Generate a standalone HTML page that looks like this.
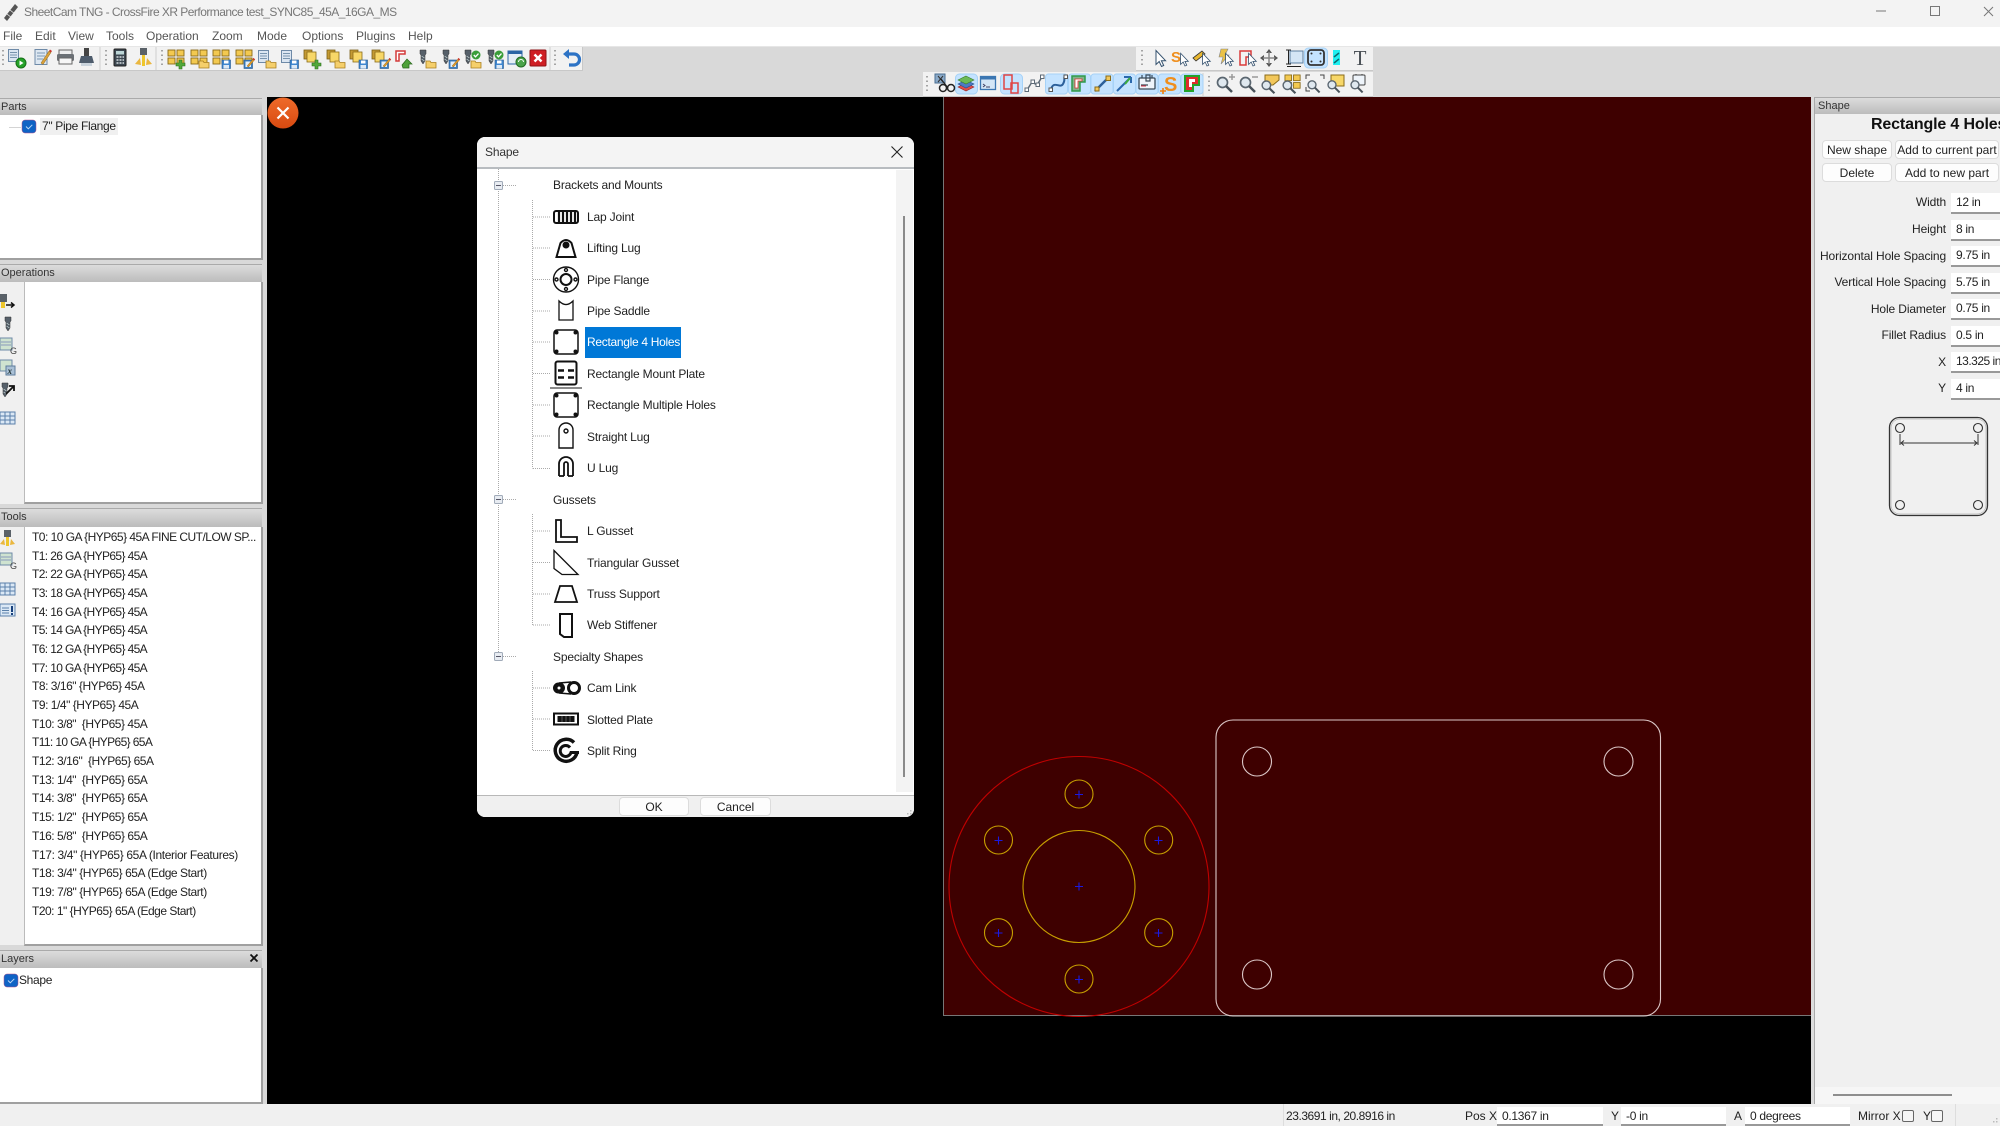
<!DOCTYPE html>
<html><head><meta charset="utf-8"><title>SheetCam TNG</title>
<style>
html,body{margin:0;padding:0;background:#d9d9d9}
#r{position:relative;width:2000px;height:1126px;overflow:hidden;background:#d9d9d9;font-family:"Liberation Sans",sans-serif;font-size:12px;color:#222;filter:blur(.35px)}
.a{position:absolute}
.t{position:absolute;white-space:nowrap;line-height:16px;height:16px;letter-spacing:-.33px}
.t.g{letter-spacing:-.62px}
.t.k{letter-spacing:-.47px}
#d .t{letter-spacing:-.17px}
.h{position:absolute;background:linear-gradient(#dcdcdc,#bcbcbc);border-top:1px solid #aaa;box-sizing:border-box;line-height:16px;padding-left:1px;color:#333;font-size:11px}
.w{position:absolute;background:#fff;box-sizing:border-box;border-right:2px solid #a0a0a0;border-bottom:2px solid #a0a0a0;border-left:1px solid #bbb}
.b{position:absolute;background:#fdfdfd;border:1px solid #dcdcdc;border-radius:4px;box-sizing:border-box;text-align:center;line-height:18px;color:#222;white-space:nowrap}
.i{position:absolute;background:#fff;border-bottom:2px solid #999;box-sizing:border-box;line-height:18px;padding-left:5px;white-space:nowrap;overflow:hidden;color:#222;letter-spacing:-.3px}
.l{position:absolute;right:54px;white-space:nowrap;line-height:16px;color:#222;letter-spacing:-.12px}
.t.m{color:#555;letter-spacing:0}
.hl{fill:#c4e3ff;stroke:#a6d2f7}
svg{position:absolute;left:0;top:0}
</style></head><body><div id="r">

<!-- title bar -->
<div class="a" style="left:0;top:0;width:2000px;height:27px;background:#f3f3f3"></div>
<div class="t" style="left:24px;top:4px;color:#777;font-size:12px;letter-spacing:-.53px">SheetCam TNG - CrossFire XR Performance test_SYNC85_45A_16GA_MS</div>
<!-- menu -->
<div class="a" style="left:0;top:27px;width:2000px;height:19px;background:#fff"></div>
<div class="t m" style="left:3px;top:28px">File</div>
<div class="t m" style="left:35px;top:28px">Edit</div>
<div class="t m" style="left:68px;top:28px">View</div>
<div class="t m" style="left:106px;top:28px">Tools</div>
<div class="t m" style="left:146px;top:28px">Operation</div>
<div class="t m" style="left:212px;top:28px">Zoom</div>
<div class="t m" style="left:257px;top:28px">Mode</div>
<div class="t m" style="left:302px;top:28px">Options</div>
<div class="t m" style="left:356px;top:28px">Plugins</div>
<div class="t m" style="left:408px;top:28px">Help</div>

<!-- toolbars background -->
<div class="a" style="left:0;top:46px;width:583px;height:25px;background:#f2f2f2;border-bottom:1px solid #c8c8c8;border-right:1px solid #c8c8c8;box-sizing:border-box"></div>
<div class="a" style="left:1136px;top:46px;width:237px;height:25px;background:#f2f2f2;border-bottom:1px solid #c8c8c8;box-sizing:border-box"></div>
<div class="a" style="left:923px;top:72px;width:450px;height:25px;background:#f2f2f2;border-bottom:1px solid #c8c8c8;box-sizing:border-box"></div>
<div class="a" style="left:0;top:46px;width:2000px;height:1px;background:#e6e6e6"></div>

<!-- canvas -->
<div class="a" style="left:267px;top:97px;width:1544px;height:1007px;background:#000"></div>
<div class="a" style="left:943px;top:97px;width:868px;height:919px;background:#3e0000;border-left:1px solid #777;border-bottom:1px solid #777;box-sizing:border-box"></div>

<!-- Left panels -->
<div class="h" style="left:0;top:98px;width:262px;height:17px">Parts</div>
<div class="w" style="left:-2px;top:115px;width:265px;height:145px"></div>
<div class="a" style="left:40px;top:118px;width:78px;height:17px;background:#f0f0f0"></div>
<div class="t" style="left:42px;top:118px">7" Pipe Flange</div>

<div class="h" style="left:0;top:264px;width:262px;height:18px">Operations</div>
<div class="a" style="left:0;top:282px;width:24px;height:222px;background:#f0f0f0"></div>
<div class="w" style="left:24px;top:282px;width:239px;height:222px"></div>

<div class="h" style="left:0;top:508px;width:262px;height:19px">Tools</div>
<div class="a" style="left:0;top:527px;width:24px;height:418px;background:#f0f0f0"></div>
<div class="w" style="left:24px;top:527px;width:239px;height:419px"></div>
<div class="t" style="left:32px;top:529px;letter-spacing:-.52px">T0: 10 GA {HYP65} 45A FINE CUT/LOW SP...</div>
<div class="t g" style="left:32px;top:548px">T1: 26 GA {HYP65} 45A</div>
<div class="t g" style="left:32px;top:566px">T2: 22 GA {HYP65} 45A</div>
<div class="t g" style="left:32px;top:585px">T3: 18 GA {HYP65} 45A</div>
<div class="t g" style="left:32px;top:604px">T4: 16 GA {HYP65} 45A</div>
<div class="t g" style="left:32px;top:622px">T5: 14 GA {HYP65} 45A</div>
<div class="t g" style="left:32px;top:641px">T6: 12 GA {HYP65} 45A</div>
<div class="t g" style="left:32px;top:660px">T7: 10 GA {HYP65} 45A</div>
<div class="t k" style="left:32px;top:678px">T8: 3/16" {HYP65} 45A</div>
<div class="t k" style="left:32px;top:697px">T9: 1/4" {HYP65} 45A</div>
<div class="t k" style="left:32px;top:716px">T10: 3/8"&nbsp; {HYP65} 45A</div>
<div class="t g" style="left:32px;top:734px">T11: 10 GA {HYP65} 65A</div>
<div class="t k" style="left:32px;top:753px">T12: 3/16"&nbsp; {HYP65} 65A</div>
<div class="t k" style="left:32px;top:772px">T13: 1/4"&nbsp; {HYP65} 65A</div>
<div class="t k" style="left:32px;top:790px">T14: 3/8"&nbsp; {HYP65} 65A</div>
<div class="t k" style="left:32px;top:809px">T15: 1/2"&nbsp; {HYP65} 65A</div>
<div class="t k" style="left:32px;top:828px">T16: 5/8"&nbsp; {HYP65} 65A</div>
<div class="t" style="left:32px;top:847px;letter-spacing:-.37px">T17: 3/4" {HYP65} 65A (Interior Features)</div>
<div class="t" style="left:32px;top:865px;letter-spacing:-.44px">T18: 3/4" {HYP65} 65A (Edge Start)</div>
<div class="t" style="left:32px;top:884px;letter-spacing:-.44px">T19: 7/8" {HYP65} 65A (Edge Start)</div>
<div class="t" style="left:32px;top:903px;letter-spacing:-.5px">T20: 1" {HYP65} 65A (Edge Start)</div>

<div class="h" style="left:0;top:950px;width:262px;height:18px">Layers</div>
<div class="w" style="left:-2px;top:968px;width:265px;height:136px"></div>
<div class="t" style="left:19px;top:972px">Shape</div>

<!-- Right panel -->
<div class="a" style="left:1811px;top:97px;width:4px;height:1007px;background:#dcdcdc;border-right:1px solid #aaa;box-sizing:border-box"></div>
<div class="a" style="left:1815px;top:97px;width:185px;height:1007px;background:#f0f0f0"></div>
<div class="h" style="left:1815px;top:97px;width:185px;height:17px;padding-left:3px;font-size:11px">Shape</div>
<div class="a" style="left:1815px;top:1087px;width:185px;height:17px;background:#f6f6f6"></div>
<div class="a" style="left:1833px;top:1094px;width:119px;height:2px;background:#8e8e8e"></div>
<div class="t" style="left:1871px;top:117px;font-size:16px;font-weight:bold;color:#111;letter-spacing:-.15px">Rectangle 4 Holes</div>
<div class="b" style="left:1822px;top:140px;width:70px;height:19px">New shape</div>
<div class="b" style="left:1895px;top:140px;width:104px;height:19px">Add to current part</div>
<div class="b" style="left:1822px;top:163px;width:70px;height:19px">Delete</div>
<div class="b" style="left:1895px;top:163px;width:104px;height:19px">Add to new part</div>

<div class="l" style="top:194px">Width</div><div class="i" style="left:1951px;top:193px;width:49px;height:21px">12 in</div>
<div class="l" style="top:221px">Height</div><div class="i" style="left:1951px;top:219.5px;width:49px;height:21px">8 in</div>
<div class="l" style="top:247.5px">Horizontal Hole Spacing</div><div class="i" style="left:1951px;top:246px;width:49px;height:21px">9.75 in</div>
<div class="l" style="top:274px">Vertical Hole Spacing</div><div class="i" style="left:1951px;top:272.5px;width:49px;height:21px">5.75 in</div>
<div class="l" style="top:300.5px">Hole Diameter</div><div class="i" style="left:1951px;top:299px;width:49px;height:21px">0.75 in</div>
<div class="l" style="top:327px">Fillet Radius</div><div class="i" style="left:1951px;top:325.5px;width:49px;height:21px">0.5 in</div>
<div class="l" style="top:353.5px">X</div><div class="i" style="left:1951px;top:352px;width:49px;height:21px;letter-spacing:-.5px">13.325 in</div>
<div class="l" style="top:380px">Y</div><div class="i" style="left:1951px;top:378.5px;width:49px;height:21px">4 in</div>

<!-- Status bar -->
<div class="a" style="left:0;top:1104px;width:2000px;height:22px;background:#f0f0f0"></div>
<div class="a" style="left:1283px;top:1104px;width:1px;height:22px;background:#ddd"></div>
<div class="a" style="left:1955px;top:1104px;width:1px;height:22px;background:#ddd"></div>
<div class="t" style="left:1286px;top:1108px;letter-spacing:-.45px">23.3691 in, 20.8916 in</div>
<div class="t" style="left:1465px;top:1108px;letter-spacing:0">Pos X</div>
<div class="i" style="left:1497px;top:1107px;width:106px;height:19px;font-size:12px">0.1367 in</div>
<div class="t" style="left:1611px;top:1108px">Y</div>
<div class="i" style="left:1621px;top:1107px;width:105px;height:19px">-0 in</div>
<div class="t" style="left:1734px;top:1108px">A</div>
<div class="i" style="left:1745px;top:1107px;width:105px;height:19px">0 degrees</div>
<div class="t" style="left:1858px;top:1108px;letter-spacing:0">Mirror X</div>
<div class="a" style="left:1902px;top:1110px;width:12px;height:12px;border:1px solid #666;border-radius:2px;box-sizing:border-box;background:#f6f6f6"></div>
<div class="t" style="left:1923px;top:1108px">Y</div>
<div class="a" style="left:1931px;top:1110px;width:12px;height:12px;border:1px solid #666;border-radius:2px;box-sizing:border-box;background:#f6f6f6"></div>

<!-- Global SVG: shapes, icons -->
<svg width="2000" height="1126" viewBox="0 0 2000 1126" fill="none">
<defs>
<g id="folder"><path d="M9 12h4l1 1.500h5v5.500H9z" fill="#f5cf6b" stroke="#a97f1f" stroke-width=".8"/></g>
<g id="floppy"><rect x="10" y="11" width="8.500" height="8.500" fill="#3e86cf" stroke="#23578c" stroke-width=".6"/><rect x="12" y="11.500" width="4.500" height="3" fill="#fff"/><rect x="11.500" y="16" width="5.500" height="3.500" fill="#dce9f6"/></g>
<g id="plus"><path d="M12 11h3v3h3v3h-3v3h-3v-3H9v-3h3z" fill="#53a83a" stroke="#2c6f1b" stroke-width=".6"/></g>
<g id="edit"><rect x="9" y="11" width="8.500" height="8.500" fill="#3e7fbf" stroke="#23578c" stroke-width=".6"/><rect x="10.500" y="12.500" width="5.500" height="5.500" fill="#e5f0fa"/><path d="M12 17l6-7 1.500 1-6 7z" fill="#dd9a2a" stroke="#885a10" stroke-width=".4"/><path d="M18 9.500l1.700 1.400" stroke="#c8332c" stroke-width="1.500"/></g>
<g id="y4"><g fill="#f3c950" stroke="#8a6b18" stroke-width=".9"><rect x="1" y="1" width="7" height="6"/><rect x="10" y="1" width="7" height="6"/><rect x="1" y="9" width="7" height="6"/><rect x="10" y="9" width="7" height="6"/></g></g>
<g id="y2"><rect x="1" y="1" width="8" height="9" fill="#c49a33" stroke="#7b5f16" stroke-width=".8"/><rect x="4" y="3" width="9" height="10" fill="#f7d768" stroke="#8a6b18" stroke-width=".8"/></g>
<g id="doc"><rect x="1.500" y="1.500" width="10" height="12" fill="#dbe6f2" stroke="#6e8aa8"/><path d="M3 4.500h7M3 7h7M3 9.500h7" stroke="#7894ae"/></g>
<g id="mill"><path d="M3 1h6v4l-1 1v6l-2 3-2-3V6L3 5z" fill="#56606a" stroke="#333"  stroke-width=".5"/><path d="M4.500 7l3 2M4.500 10l3 2" stroke="#cdd" stroke-width=".7"/></g>
<g id="chk"><circle cx="14" cy="6" r="4.500" fill="#3a9d3a"/><path d="M11.800 6l1.700 1.800 3-3.200" stroke="#fff" stroke-width="1.300"/></g>
<g id="arrow"><path d="M7 1.500v14l3.200-3 2.300 5 2.200-1-2.300-4.800h4.200z" fill="#fff" stroke="#33506d" stroke-width="1"/></g>
<g id="glass"><circle cx="7.500" cy="8.500" r="5" fill="#dfe8ef" stroke="#5a6670" stroke-width="1.700"/><path d="M11 12l6 6" stroke="#48525a" stroke-width="2.500"/></g>
<g id="check"><rect x="0" y="0" width="14" height="13" rx="3" fill="#0f63c5" stroke="#b04f8a" stroke-width=".5"/><path d="M4 6.500l2.300 2.300 4-4" stroke="#bcd7f5" stroke-width="1"/></g>
</defs>

<!-- grippers -->
<g stroke="#8a8a8a" stroke-width="1.500" stroke-dasharray="1.500 3">
<path d="M3 50v17M106 50v17M162 50v17M555 50v17M1142 50v17M927 76v17M1209 76v17"/>
</g>
<path d="M100 47v23M156 47v23M550 47v23M1203 73v23" stroke="#cfcfcf"/>

<!-- Window icon + buttons -->
<path d="M4 18L15 4l3 3L7 21z" fill="#555"/><path d="M7 14l5 4M10 10l5 4" stroke="#eee" stroke-width=".8"/>
<path d="M1876 11h10" stroke="#777"/><rect x="1930.500" y="6.500" width="9" height="9" stroke="#777"/><path d="M1984 7l9 9M1993 7l-9 9" stroke="#777"/>

<!-- Toolbar 1 -->
<g transform="translate(7,48)"><use href="#doc"/><circle cx="14" cy="15" r="5" fill="#25a22a" stroke="#167016"/><path d="M12.500 12.500v5l4-2.500z" fill="#fff"/></g>
<g transform="translate(33,48)"><rect x="2" y="1.500" width="12" height="15" fill="#dde7f1" stroke="#6e8aa8"/><path d="M4 5h8M4 8h8M4 11h6" stroke="#7c97b2"/><path d="M8 15l8-12 2 1.500-8 12z" fill="#d9a13a" stroke="#8c6416" stroke-width=".5"/><path d="M16 3l1-1.500 2 1.500-1 1.500z" fill="#c8332c"/></g>
<g transform="translate(56,48)"><rect x="3" y="2" width="13" height="5" fill="#eee" stroke="#666"/><rect x="1" y="6" width="17" height="7" rx="1.500" fill="#6b7075"/><rect x="3" y="10" width="13" height="6" fill="#f6f6f6" stroke="#666"/></g>
<g transform="translate(78,48)"><rect x="6" y="0" width="5" height="8" fill="#444"/><path d="M3 8h11l2 7H1z" fill="#4e5c6c"/><rect x="3" y="15" width="11" height="3" fill="#c9d3dc"/></g>
<g transform="translate(111,48)"><rect x="3" y="1" width="12" height="17" rx="1" fill="#3c4750" stroke="#222"/><rect x="5" y="3" width="8" height="3.500" fill="#bcd5d6"/><path d="M5.500 9h2M8.500 9h2M11.500 9h1.500M5.500 12h2M8.500 12h2M11.500 12h1.500M5.500 15h2M8.500 15h2M11.500 15h1.500" stroke="#d6dee2" stroke-width="1.500"/></g>
<g transform="translate(134,48)"><rect x="6" y="0" width="7" height="7" fill="#5a6168"/><rect x="8" y="7" width="3" height="11" fill="#eec62c"/><path d="M1 16l5-6 1 7zM18 16l-5-6-1 7z" fill="#eab740"/></g>
<g transform="translate(167,49)"><use href="#y4"/><use href="#plus"/></g>
<g transform="translate(190,49)"><use href="#y4"/><use href="#folder"/></g>
<g transform="translate(212,49)"><use href="#y4"/><use href="#floppy"/></g>
<g transform="translate(235,49)"><use href="#y4"/><use href="#edit"/></g>
<g transform="translate(257,49)"><use href="#doc"/><use href="#folder"/></g>
<g transform="translate(280,49)"><use href="#doc"/><use href="#floppy"/></g>
<g transform="translate(303,49)"><use href="#y2"/><use href="#plus"/></g>
<g transform="translate(326,49)"><use href="#y2"/><use href="#folder"/></g>
<g transform="translate(349,49)"><use href="#y2"/><use href="#floppy"/></g>
<g transform="translate(371,49)"><use href="#y2"/><use href="#edit"/></g>
<g transform="translate(394,49)"><path d="M2 2h9v3H5v7H2z" fill="#fff" stroke="#d33a3a" stroke-width="1.500"/><path d="M8 16l5-6 5 5h-3v4H9z" fill="#4ea13a" stroke="#27661a" stroke-width=".7"/></g>
<g transform="translate(417,49)"><use href="#mill"/><use href="#folder"/></g>
<g transform="translate(440,49)"><use href="#mill"/><use href="#edit"/></g>
<g transform="translate(462,49)"><use href="#mill"/><use href="#folder"/><use href="#chk"/></g>
<g transform="translate(485,49)"><use href="#mill"/><use href="#floppy"/><use href="#chk"/></g>
<g transform="translate(507,49)"><rect x="1" y="2" width="14" height="13" fill="#e6eef6" stroke="#2b65a5" stroke-width="1"/><rect x="1" y="2" width="14" height="3" fill="#2b65a5"/><circle cx="14" cy="13" r="5" fill="#4ba34a" stroke="#226b22"/><path d="M11.500 13a2.500 2.500 0 0 1 5 0" stroke="#fff"/></g>
<g transform="translate(529,49)"><rect x="1" y="1" width="16" height="16" rx="1" fill="#cf1f24" stroke="#8f1316"/><path d="M5.500 5.500l7 7M12.500 5.500l-7 7" stroke="#fff" stroke-width="2.500"/></g>
<path d="M567 54h7a5.500 5.500 0 0 1 0 11h-5" stroke="#2d73c5" stroke-width="3.200" fill="none"/>
<path d="M563 54l6-5v10z" fill="#2d73c5"/>

<!-- Right toolbar highlights -->
<g class="hl"><rect x="1304.500" y="48" width="23" height="20" rx="4"/>
<rect x="955.500" y="74" width="22" height="20" rx="4"/><rect x="1000.500" y="74" width="22" height="20" rx="4"/><rect x="1045.500" y="74" width="22" height="20" rx="3"/><rect x="1068.500" y="74" width="22" height="20" rx="3"/><rect x="1091" y="74" width="22" height="20" rx="3"/><rect x="1113.500" y="74" width="22" height="20" rx="3"/><rect x="1136" y="74" width="22" height="20" rx="3"/><rect x="1158.500" y="74" width="22" height="20" rx="3"/><rect x="1181" y="74" width="22" height="20" rx="3"/></g>

<!-- Toolbar top right -->
<g transform="translate(1149,49)"><use href="#arrow"/></g>
<text x="1171" y="62" font-family="Liberation Sans" font-weight="bold" font-size="15" fill="#ef8f1e">S</text><g transform="translate(1175,52) scale(.8)"><use href="#arrow"/></g>
<g transform="translate(1192,48)"><path d="M1 10l9-7 3 3-9 7z" fill="#e9b72f" stroke="#333" stroke-width=".8"/></g><g transform="translate(1197,52) scale(.8)"><use href="#arrow"/></g>
<g transform="translate(1216,48)"><path d="M5 1h7l-3 6h4l-8 9 2-7H3z" fill="#eac248" stroke="#888" stroke-width=".6"/></g><g transform="translate(1220,52) scale(.8)"><use href="#arrow"/></g>
<path d="M1240 65V51h11v6h-5v8z" stroke="#d93a3a" stroke-width="1.500"/><g transform="translate(1243,52) scale(.8)"><use href="#arrow"/></g>
<path d="M1269 49l3 4h-6zM1269 67l3-4h-6zM1260 58l4-3v6zM1278 58l-4-3v6z" fill="#555"/><path d="M1269 52v12M1263 58h12" stroke="#888" stroke-width="1.500"/>
<rect x="1290" y="51" width="13" height="12" fill="#d4e6f6" stroke="#5d80a2"/><path d="M1287 50h5M1287 64h5M1289.500 50v14M1288 66.500h14" stroke="#222" transform="translate(-1,0)"/>
<rect x="1308" y="50" width="16" height="15" rx="3" stroke="#333" stroke-width="1.800"/><g fill="#333"><circle cx="1311.500" cy="53.500" r="1"/><circle cx="1320.500" cy="53.500" r="1"/><circle cx="1311.500" cy="61.500" r="1"/><circle cx="1320.500" cy="61.500" r="1"/></g>
<rect x="1333" y="50" width="7" height="15" fill="#1ef0f2"/><path d="M1334 57l5-4M1334 63l5-4" stroke="#0c6a6e" stroke-width="1.500"/>
<text x="1360" y="65" text-anchor="middle" font-family="Liberation Serif" font-size="21" fill="#4a5056">T</text>

<!-- Toolbar second row -->
<g transform="translate(935,74)"><rect x="0" y="0" width="10" height="9" fill="#8aa9c8" stroke="#4a6f92"/><path d="M3 2l5 6M8 2L3 8" stroke="#333"/><circle cx="8" cy="14" r="3.500" stroke="#222" stroke-width="1.500"/><circle cx="16" cy="14" r="3.500" stroke="#222" stroke-width="1.500"/><path d="M6 5l7 9" stroke="#222" stroke-width="1.300"/></g>
<g transform="translate(958,74)"><path d="M8 8l8 4-8 4-8-4z" fill="#df4d4a" stroke="#9b2725" stroke-width=".6" transform="translate(0,1)"/><path d="M8 5l8 4-8 4-8-4z" fill="#4c7bc4" stroke="#264f90" stroke-width=".6" transform="translate(0,1)"/><path d="M8 1l8 4-8 4-8-4z" fill="#6cba56" stroke="#3a7d2b" stroke-width=".6" transform="translate(0,1)"/></g>
<rect x="980.500" y="76.500" width="15" height="13" fill="#d4e6f6" stroke="#3b76b2" stroke-width="1.300"/><rect x="980.500" y="76.500" width="15" height="3" fill="#3b76b2"/><path d="M983 84l2 1.500-2 1.500M986 87h4" stroke="#446"/>
<path d="M1004 75h8v14h-8zM1011 83h7v10h-7z" stroke="#e04545" stroke-width="1.500"/>
<g stroke="#5d6a76"><path d="M1027 90l5-8 5 3 5-8" stroke-width="1.500"/><g fill="#fff"><rect x="1025" y="88" width="3.500" height="3.500"/><rect x="1031" y="80" width="3.500" height="3.500"/><rect x="1036" y="83" width="3.500" height="3.500"/><rect x="1040.500" y="75" width="3.500" height="3.500"/></g></g>
<g stroke="#2b5f9a"><path d="M1051 89c3-9 9 0 12-5s0-6 2-8" stroke-width="2"/><g fill="#fff" stroke="#555"><rect x="1049" y="88" width="3.500" height="3.500"/><rect x="1064" y="75" width="3.500" height="3.500"/></g></g>
<path d="M1072 76h13v6h-5v9h-8z" fill="#7fb28a" stroke="#2f9a4a" stroke-width="1.500"/><path d="M1075 79h7v2h-4v7h-3z" fill="#fff" stroke="#d33" stroke-width=".8"/>
<path d="M1095 91l11-11" stroke="#2b5f9a" stroke-width="2.500"/><rect x="1106" y="76" width="4.500" height="4.500" fill="#f1c75a" stroke="#8a6b18"/><rect x="1095" y="87" width="4" height="4" fill="#f1c75a" stroke="#8a6b18"/>
<path d="M1117 91l14-14M1131 77v6M1131 77h-7" stroke="#2b68ad" stroke-width="2"/><path d="M1125 84l5-6" stroke="#3cad3c" stroke-width="2"/>
<rect x="1139" y="78" width="16" height="11" rx="1" fill="#eef4fa" stroke="#3a4a58" stroke-width="1.300"/><path d="M1142 78v-3M1152 78v-3M1146 75h4v6h-4zM1141 85h7" stroke="#3a4a58" stroke-width="1.200"/><path d="M1141 86h5" stroke="#d34" />
<text x="1164" y="91" font-family="Liberation Sans" font-weight="bold" font-size="20" fill="#ef8f1e">S</text><path d="M1160 91h6M1163 88v6" stroke="#ef7f0e" stroke-width="1.600"/>
<path d="M1185 76h14v9h-6v6h-8z" fill="#e02c2c" stroke="#22a32a" stroke-width="2"/><path d="M1189 79h6v3h-3v5h-3z" fill="#fff"/>

<g transform="translate(1215,74)"><use href="#glass"/><path d="M14 3h6M17 0v6" stroke="#999" stroke-width="1.500"/></g>
<g transform="translate(1238,74)"><use href="#glass"/><path d="M14 3h6" stroke="#999" stroke-width="1.500"/></g>
<path d="M1265 75h14v5l-6 5h-8z" fill="#f2c75b" stroke="#8a6b18"/>
<g transform="translate(1260,78) scale(.85)"><use href="#glass"/></g>
<g transform="translate(1284,74) scale(.95)"><use href="#y4"/></g><g transform="translate(1281,78) scale(.85)"><use href="#glass"/></g>
<g transform="translate(1306,78) scale(.8)"><use href="#glass"/></g>
<path d="M1306 79v-4h4M1324 79v-4h-4M1306 87v4h4" stroke="#444"/>
<rect x="1331" y="75" width="13" height="11" fill="#f7d768" stroke="#8a6b18"/><g transform="translate(1326,78) scale(.8)"><use href="#glass"/></g>
<rect x="1353" y="75" width="12" height="10" rx="1" fill="#eef4fa" stroke="#444"/><path d="M1356 75v-1M1362 75v-1" stroke="#444"/><g transform="translate(1349,78) scale(.8)"><use href="#glass"/></g>

<!-- Left strip icons -->
<g transform="translate(-2,294)"><rect x="2" y="0" width="7" height="8" fill="#5a6168"/><rect x="3" y="8" width="4" height="6" fill="#eec62c"/><path d="M8 11h7m-2-2.500l3 2.500-3 2.500" stroke="#111" stroke-width="1.500"/></g>
<g transform="translate(2,316)"><use href="#mill"/></g>
<g transform="translate(0,338)"><rect x="0" y="0" width="12" height="12" fill="#cfe3d0" stroke="#6e8aa8"/><path d="M1 4h10M1 7h10" stroke="#89b"/><text x="10" y="16" font-family="Liberation Sans" font-size="9" fill="#444">G</text></g>
<g transform="translate(0,360)"><rect x="0" y="0" width="12" height="11" fill="#cfe3d0" stroke="#6e8aa8"/><rect x="6" y="6" width="9" height="9" fill="#a9c0d6" stroke="#5e7d9b"/><text x="7.500" y="14" font-family="Liberation Serif" font-style="italic" font-weight="bold" font-size="9" fill="#233">x</text></g>
<g transform="translate(-1,382) "><use href="#mill"/><path d="M7 12l8-8m-5 0h5v5" stroke="#111" stroke-width="1.800"/></g>
<g stroke="#5b80aa" fill="#dbe8f5"><rect x="0" y="412" width="15" height="12"/></g><path d="M0 416h15M0 420h15M5 412v12M10 412v12" stroke="#5b80aa"/>

<g transform="translate(0,530)"><rect x="4" y="0" width="7" height="7" fill="#5a6168"/><rect x="6" y="7" width="3" height="9" fill="#eec62c"/><path d="M0 14l4-5 1 6zM15 14l-4-5-1 6z" fill="#eab740"/></g>
<g transform="translate(0,553)"><rect x="0" y="0" width="12" height="12" fill="#cfe3d0" stroke="#6e8aa8"/><path d="M1 4h10M1 7h10" stroke="#89b"/><text x="10" y="16" font-family="Liberation Sans" font-size="9" fill="#444">G</text></g>
<g stroke="#5b80aa" fill="#dbe8f5"><rect x="0" y="583" width="15" height="12"/></g><path d="M0 587h15M0 591h15M5 583v12M10 583v12" stroke="#5b80aa"/>
<rect x="0" y="604" width="15" height="12" fill="#dbe8f5" stroke="#5b80aa"/><path d="M2 608h7M2 610.500h7M2 613h7" stroke="#5b80aa"/><path d="M12 606v6M12 613v2" stroke="#17407c" stroke-width="2"/>

<!-- parts/layers checkboxes -->
<path d="M9.500 127.500h11" stroke="#aaa" stroke-dasharray="1 1"/>
<g transform="translate(22,120)"><use href="#check"/></g>
<g transform="translate(4,974)"><use href="#check"/></g>

<!-- panel x at layers -->
<path d="M250.500 954.500l7 7M257.500 954.500l-7 7" stroke="#111" stroke-width="1.800"/>

<!-- right-panel diagram -->
<g stroke="#333"><rect x="1889.500" y="417.500" width="98" height="98" rx="10" stroke-width="1.300"/><rect x="1891" y="419" width="95" height="95" rx="9" stroke="#999" stroke-width=".5"/>
<circle cx="1900" cy="428" r="4.500" stroke-width="1.100"/><circle cx="1978" cy="428" r="4.500" stroke-width="1.100"/><circle cx="1900" cy="505" r="4.500" stroke-width="1.100"/><circle cx="1978" cy="505" r="4.500" stroke-width="1.100"/>
<path d="M1900 434v11M1978 434v11M1901 443h76M1904 440.500l-3 2.500 3 2.500M1974 440.500l3 2.500-3 2.500" stroke-width="1"/></g>

<!-- status grip -->
<g fill="#bbb"><rect x="1996" y="1118" width="1.500" height="1.500"/><rect x="1993" y="1121" width="1.500" height="1.500"/><rect x="1996" y="1121" width="1.500" height="1.500"/></g>

<!-- Orange close -->
<defs><linearGradient id="og" x1="0" y1="0" x2="0" y2="1"><stop offset="0" stop-color="#ee6a2a"/><stop offset="1" stop-color="#d84a10"/></linearGradient></defs>
<circle cx="283" cy="113" r="15.500" fill="url(#og)"/><path d="M277.500 107.500l11 11M288.500 107.500l-11 11" stroke="#fff" stroke-width="2.200"/>

<!-- canvas geometry -->
<g stroke-width="1.100">
<circle cx="1079" cy="886.500" r="130" stroke="#c00000"/>
<g stroke="#c8a000"><circle cx="1079" cy="886.500" r="56"/><circle cx="1079" cy="794" r="14"/><circle cx="1079" cy="979" r="14"/><circle cx="998.500" cy="840" r="14"/><circle cx="998.500" cy="932.700" r="14"/><circle cx="1158.700" cy="840" r="14"/><circle cx="1158.700" cy="932.700" r="14"/></g>
<path d="M1075 794.500h8M1079 790.500v8M1075 886.500h8M1079 882.500v8M1075 979.500h8M1079 975.500v8M994.500 840.500h8M998.500 836.500v8M994.500 933h8M998.500 929v8M1154.500 840.500h8M1158.500 836.500v8M1154.500 933h8M1158.500 929v8" stroke="#1a1ae0"/>
<g stroke="#dcc8c8"><rect x="1216" y="720" width="444.500" height="296" rx="17"/><circle cx="1257" cy="761.500" r="14.500"/><circle cx="1618.500" cy="761.500" r="14.500"/><circle cx="1257" cy="974.500" r="14.500"/><circle cx="1618.500" cy="974.500" r="14.500"/></g>
</g>
</svg>

<!-- Dialog -->
<div id="d" class="a" style="left:477px;top:137px;width:437px;height:680px;background:#fff;border-radius:8px;overflow:hidden">
  <div class="a" style="left:0;top:0;width:437px;height:30px;background:#f4f4f4;border-bottom:2px solid #b8bcc0;box-sizing:content-box"></div>
  <div class="t" style="left:8px;top:7px;color:#333">Shape</div>
  <div class="a" style="left:419px;top:33px;width:17px;height:622px;background:#f3f3f3"></div>
  <div class="a" style="left:426px;top:79px;width:2px;height:561px;background:#8a8a8a"></div>
  <div class="a" style="left:0;top:658px;width:437px;height:22px;background:#f0f0f0;border-top:1px solid #b8b8b8;box-sizing:border-box"></div>
  <div class="b" style="left:142px;top:660px;width:70px;height:19px">OK</div>
  <div class="b" style="left:223px;top:660px;width:71px;height:19px">Cancel</div>
  <div class="a" style="left:108px;top:190px;width:96px;height:31px;background:#0078d7"></div>
  <svg width="437" height="680" viewBox="477 137 437 680" fill="none">
    <path d="M891.500 146.500l11 11M902.500 146.500l-11 11" stroke="#222" stroke-width="1.100"/>
    <g stroke="#aaa" stroke-dasharray="1 1">
      <path d="M498.500 169v487M532.500 200v268.500M532.500 514v111M532.500 671v79.500"/>
      <path d="M503 185.500h14M503 499.500h14M503 656.500h14M533 217h18M533 248h18M533 279.500h18M533 311h18M533 342h18M533 373.500h18M533 405h18M533 436h18M533 468.500h18M533 531h18M533 562.500h18M533 594h18M533 625h18M533 688h18M533 719h18M533 750.500h18"/>
    </g>
    <g fill="#e8ecf2" stroke="#a0aab8"><rect x="494.500" y="181.500" width="8" height="8" rx="1"/><rect x="494.500" y="495.500" width="8" height="8" rx="1"/><rect x="494.500" y="652.500" width="8" height="8" rx="1"/></g>
    <path d="M496 185.500h5M496 499.500h5M496 656.500h5" stroke="#556"/>
    <!-- shape icons -->
    <g stroke="#111">
    <g transform="translate(566,217)" stroke-width="2"><rect x="-12" y="-6" width="24" height="12" rx="2"/><path d="M-7-5v10M-3-5v10M1-5v10M5-5v10M9-5v10" stroke-width="2.200"/></g>
    <g transform="translate(566,248)" stroke-width="2"><path d="M-9.500 9l4-14q5.500-6 11 0l4 14z"/><circle cx="0" cy="-3" r="2.500" fill="#111"/></g>
    <g transform="translate(566,279.500)" stroke-width="1.400"><circle r="12.500"/><circle r="5.500" stroke-width="2"/><circle cx="0" cy="-9.500" r="1.500"/><circle cx="0" cy="9.500" r="1.500"/><circle cx="-9.500" r="1.500"/><circle cx="9.500" r="1.500"/></g>
    <g transform="translate(566,311)" stroke-width="1.300"><path d="M-7-10q7 7 14 0v19h-14z"/></g>
    <g transform="translate(566,342)" stroke-width="1.500"><rect x="-12" y="-12" width="24" height="24" rx="3"/><g fill="#111" stroke="none"><circle cx="-9.500" cy="-9.500" r="2"/><circle cx="9.500" cy="-9.500" r="2"/><circle cx="-9.500" cy="9.500" r="2"/><circle cx="9.500" cy="9.500" r="2"/></g></g>
    <g transform="translate(566,373.500)" stroke-width="2"><rect x="-10.500" y="-12" width="21" height="23" rx="2"/><path d="M-8-3h6M2-3h6M-8 4h6M2 4h6" stroke-width="2.500"/><path d="M-16 14.500h32" stroke="#444" stroke-width="1.200"/></g>
    <g transform="translate(566,405)" stroke-width="1.500"><rect x="-12" y="-12" width="24" height="24" rx="3"/><g fill="#111" stroke="none"><circle cx="-9.500" cy="-9.500" r="2"/><circle cx="9.500" cy="-9.500" r="2"/><circle cx="-9.500" cy="9.500" r="2"/><circle cx="9.500" cy="9.500" r="2"/></g></g>
    <g transform="translate(566,436)" stroke-width="1.400"><path d="M-7 12v-18a7 7 0 0 1 14 0v18z"/><circle cy="-5" r="2"/></g>
    <g transform="translate(566,467)" stroke-width="1.800"><path d="M-7 9V-3a7 7 0 0 1 14 0V9M-2 9V-3a2 2 0 0 1 4 0V9M-7 9h5M2 9h5"/></g>
    <g transform="translate(566,531)" stroke-width="1.800"><path d="M-10-11h5v17h16v5h-21z"/></g>
    <g transform="translate(566,562.500)" stroke-width="1.300"><path d="M-12-12l24 24h-16l-8-6z"/></g>
    <g transform="translate(566,594)" stroke-width="1.800"><path d="M-6-8h12l5 16h-22z"/></g>
    <g transform="translate(566,625)" stroke-width="2"><path d="M-6-11h12v23h-8l-4-3z"/></g>
    <g transform="translate(566,688)" stroke-width="2"><rect x="-12" y="-4.500" width="10" height="9" rx="4.500" fill="#111"/><circle cx="8" r="5.500" stroke-width="3"/><path d="M-7-5l12-1M-7 5l12 1" stroke-width="1.500"/><circle cx="-7" r="1.500" fill="#fff" stroke="none"/></g>
    <g transform="translate(566,719)" stroke-width="2"><rect x="-12" y="-5.500" width="24" height="11"/><rect x="-8.500" y="-3" width="17" height="6" fill="#111" stroke="none"/><path d="M-4-3v6M0-3v6M4-3v6" stroke="#888" stroke-width=".6"/></g>
    <g transform="translate(566,750.500)"><path d="M8-8A11 11 0 1 0 11 2" stroke-width="3.500"/><path d="M4-3A5.500 5.500 0 1 0 5 2h8" stroke-width="3"/></g>
    </g>
    <g fill="#bbb"><rect x="910" y="810" width="1.500" height="1.500"/><rect x="907" y="813" width="1.500" height="1.500"/><rect x="910" y="813" width="1.500" height="1.500"/></g>
  </svg>
  <!-- labels, positioned relative to dialog -->
  <div class="t" style="left:76px;top:40px">Brackets and Mounts</div>
  <div class="t" style="left:110px;top:72px">Lap Joint</div>
  <div class="t" style="left:110px;top:103px">Lifting Lug</div>
  <div class="t" style="left:110px;top:135px">Pipe Flange</div>
  <div class="t" style="left:110px;top:166px">Pipe Saddle</div>
  <div class="t" style="left:110px;top:197px;color:#fff;letter-spacing:-.3px">Rectangle 4 Holes</div>
  <div class="t" style="left:110px;top:229px">Rectangle Mount Plate</div>
  <div class="t" style="left:110px;top:260px">Rectangle Multiple Holes</div>
  <div class="t" style="left:110px;top:292px">Straight Lug</div>
  <div class="t" style="left:110px;top:323px">U Lug</div>
  <div class="t" style="left:76px;top:355px">Gussets</div>
  <div class="t" style="left:110px;top:386px">L Gusset</div>
  <div class="t" style="left:110px;top:418px">Triangular Gusset</div>
  <div class="t" style="left:110px;top:449px">Truss Support</div>
  <div class="t" style="left:110px;top:480px">Web Stiffener</div>
  <div class="t" style="left:76px;top:512px">Specialty Shapes</div>
  <div class="t" style="left:110px;top:543px">Cam Link</div>
  <div class="t" style="left:110px;top:575px">Slotted Plate</div>
  <div class="t" style="left:110px;top:606px">Split Ring</div>
</div>

</div></body></html>
